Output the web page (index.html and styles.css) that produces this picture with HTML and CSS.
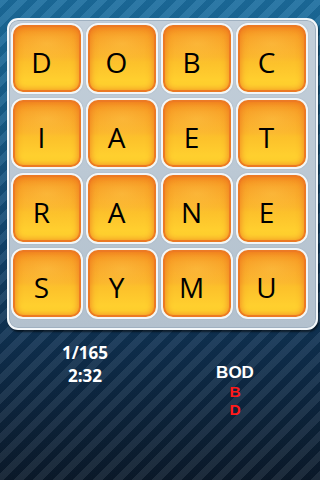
FILE: index.html
```html
<!DOCTYPE html>
<html>
<head>
<meta charset="utf-8">
<link rel="stylesheet" href="styles.css">
</head>
<body>
<div class="screen">
  <div class="board">
    <div class="tile">D</div><div class="tile">O</div><div class="tile">B</div><div class="tile">C</div>
    <div class="tile">I</div><div class="tile">A</div><div class="tile">E</div><div class="tile">T</div>
    <div class="tile">R</div><div class="tile">A</div><div class="tile">N</div><div class="tile">E</div>
    <div class="tile">S</div><div class="tile">Y</div><div class="tile">M</div><div class="tile">U</div>
  </div>
  <div class="info">
    <div class="col stats">
      <div class="line">1/165</div>
      <div class="line">2:32</div>
    </div>
    <div class="col words">
      <div class="line word">BOD</div>
      <div class="line miss">B</div>
      <div class="line miss">D</div>
    </div>
  </div>
</div>
</body>
</html>
```
FILE: styles.css
```css
html, body {
  margin: 0;
  padding: 0;
}
body {
  width: 320px;
  height: 480px;
  overflow: hidden;
  font-family: "Open Sans", "Noto Sans", "DejaVu Sans", sans-serif;
  background:
    repeating-linear-gradient(-45deg, rgba(255,255,255,0.075) 0 7px, rgba(0,0,0,0.07) 7px 14px),
    linear-gradient(to bottom, #1c6e9f 0%, #175d8a 25%, #124670 50%, #0f3050 72%, #0b1a2b 100%);
}
.screen {
  width: 320px;
  height: 480px;
  display: flex;
  flex-direction: column;
}
.board {
  margin: 18px 0 0 7px;
  width: 302px;
  height: 305px;
  box-sizing: content-box;
  border: 2px solid #f3f7fa;
  border-radius: 11px;
  background: linear-gradient(to bottom, #c3cfda, #b3c1ce);
  box-shadow: inset 0 0 0 1px #9fb0c0, 1px 2px 2px rgba(0,0,0,0.55);
  padding: 3px 3px 0 2px;
  display: grid;
  grid-template-columns: repeat(4, 72px);
  grid-template-rows: repeat(4, 71px);
  column-gap: 3px;
  row-gap: 4px;
  align-content: start;
}
.tile {
  border: 2px solid #f2f6f9;
  border-radius: 12px;
  background:
    radial-gradient(ellipse 60% 30% at 50% 28%, rgba(255,215,90,0.35), rgba(255,215,90,0) 100%),
    linear-gradient(to bottom, #f5901f 0%, #f9a526 30%, #fbb52b 48%, #fcc02b 55%, #ffce2e 80%, #ffd830 100%);
  box-shadow: inset 0 0 0 2px #ec7a24, inset 0 0 7px 2px rgba(236,110,30,0.8), 0 0 1px rgba(90,110,130,0.5);
  display: flex;
  align-items: center;
  justify-content: center;
  padding: 6px 11px 0 0;
  box-sizing: border-box;
  font-size: 28px;
  font-weight: 400;
  color: #000;
  line-height: 1;
}
.info {
  display: flex;
  padding: 0 10px;
  margin-top: 11px;
}
.col {
  width: 150px;
  display: flex;
  flex-direction: column;
  align-items: center;
  font-weight: 700;
  font-size: 17px;
  color: #fff;
}
.stats .line {
  height: 23px;
  line-height: 23px;
}
.words {
  padding-top: 22px;
  font-family: "Liberation Sans", Arial, sans-serif;
}
.words .word {
  height: 20px;
  line-height: 20px;
}
.words .miss {
  height: 18px;
  line-height: 18px;
  color: #ff1a1a;
  font-size: 15.5px;
}
```
